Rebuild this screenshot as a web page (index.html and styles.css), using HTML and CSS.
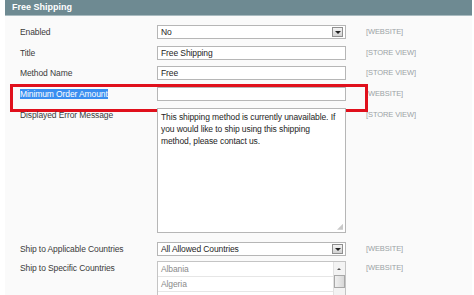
FILE: index.html
```html
<!DOCTYPE html>
<html lang="en">
<head>
    <meta charset="UTF-8">
    <title>Free Shipping</title>
    <link rel="stylesheet" href="styles.css">
</head>
<body>
<div class="section">
    <div class="section-head">Free Shipping</div>
    <div class="form">
        <div class="row">
            <label class="label">Enabled</label>
            <div class="field select"><span>No</span><i class="arrow"></i></div>
            <span class="scope">[WEBSITE]</span>
        </div>
        <div class="row">
            <label class="label">Title</label>
            <div class="field">Free Shipping</div>
            <span class="scope">[STORE VIEW]</span>
        </div>
        <div class="row">
            <label class="label">Method Name</label>
            <div class="field">Free</div>
            <span class="scope">[STORE VIEW]</span>
        </div>
        <div class="row marked">
            <label class="label"><span class="picked">Minimum Order Amount</span></label>
            <div class="field"></div>
            <span class="scope">[WEBSITE]</span>
        </div>
        <div class="row tall">
            <label class="label">Displayed Error Message</label>
            <div class="field area">This shipping method is currently unavailable. If you would like to ship using this shipping method, please contact us.<i class="grip"></i></div>
            <span class="scope">[STORE VIEW]</span>
        </div>
        <div class="row gap">
            <label class="label">Ship to Applicable Countries</label>
            <div class="field select"><span>All Allowed Countries</span><i class="arrow"></i></div>
            <span class="scope">[WEBSITE]</span>
        </div>
        <div class="row">
            <label class="label">Ship to Specific Countries</label>
            <div class="field multi">
                <ul class="options">
                    <li>Albania</li>
                    <li>Algeria</li>
                    <li></li>
                </ul>
                <div class="scroll">
                    <i class="up"></i>
                    <i class="thumb"></i>
                </div>
            </div>
            <span class="scope">[WEBSITE]</span>
        </div>
    </div>
</div>
</body>
</html>
```

FILE: styles.css
```css
*{
    margin: 0;
    padding: 0;
    box-sizing: border-box;
}
ul{
    list-style: none;
}
body{
    background: #fff;
    font-family: "Liberation Sans", Arial, sans-serif;
    font-size: 8.5px;
    letter-spacing: -0.1px;
    color: #3a3a3a;
    overflow: hidden;
}
.section{
    margin-left: 5px;
    width: 467px;
    height: 295px;
    background: #fafafa;
    overflow: hidden;
}
.section-head{
    height: 16px;
    padding-left: 7px;
    line-height: 15px;
    background: #6e8a92;
    border-bottom: 1px solid #a9bbc0;
    color: #fff;
    font-weight: bold;
    font-size: 9px;
    letter-spacing: 0;
}
.form{
    padding-top: 9px;
}
.row{
    display: grid;
    grid-template-columns: 137px 189px auto;
    padding-left: 15px;
    margin-bottom: 6.7px;
    position: relative;
}
.row.gap{
    margin-top: 9px;
    margin-bottom: 5px;
}
.label{
    line-height: 14px;
}
.picked{
    background: #3a8ef0;
    color: #fff;
}
.marked::before{
    content: "";
    position: absolute;
    left: 5px;
    top: -3px;
    width: 352px;
    height: 22px;
    border: 3px solid #e0101c;
}
.field{
    height: 14px;
    background: #fff;
    border: 1px solid #b6b6b6;
    padding: 0 3px;
    line-height: 12px;
    color: #1e1e1e;
    position: relative;
}
.select{
    display: flex;
    align-items: center;
    justify-content: space-between;
}
.arrow{
    width: 11px;
    height: 10px;
    border: 1px solid #8f8f8f;
    background: linear-gradient(#f4f4f4, #d2d2d2);
    position: relative;
    margin-right: -1px;
}
.arrow::after{
    content: "";
    position: absolute;
    left: 2px;
    top: 3px;
    border-left: 3px solid transparent;
    border-right: 3px solid transparent;
    border-top: 3px solid #222;
}
.area{
    height: 125px;
    padding: 2px 3px;
    line-height: 12px;
}
.grip{
    position: absolute;
    right: 2px;
    bottom: 2px;
    width: 6px;
    height: 6px;
    background: radial-gradient(circle, #aaa 0.6px, transparent 0.9px) 0 0 / 2px 2px;
    clip-path: polygon(100% 0, 100% 100%, 0 100%);
}
.scope{
    margin-left: 20px;
    font-size: 7.5px;
    letter-spacing: -0.1px;
    color: #9aa3a6;
    line-height: 14px;
}
.multi{
    height: 50px;
    padding: 0;
    display: flex;
    border-color: #c4c4c4;
}
.options{
    flex: 1;
    color: #8a8a8a;
}
.options li{
    height: 15px;
    line-height: 14px;
    padding-left: 3px;
    border-bottom: 1px solid #e6e6e6;
}
.scroll{
    width: 12px;
    border-left: 1px solid #e2e2e2;
    background: #f3f3f3;
    position: relative;
}
.up{
    position: absolute;
    left: 3px;
    top: 6px;
    border-left: 2px solid transparent;
    border-right: 2px solid transparent;
    border-bottom: 2px solid #555;
}
.thumb{
    position: absolute;
    left: 0;
    top: 13px;
    width: 11px;
    height: 13px;
    border: 1px solid #a8a8a8;
    background: linear-gradient(90deg, #f0f0f0, #d8d8d8);
}
```
